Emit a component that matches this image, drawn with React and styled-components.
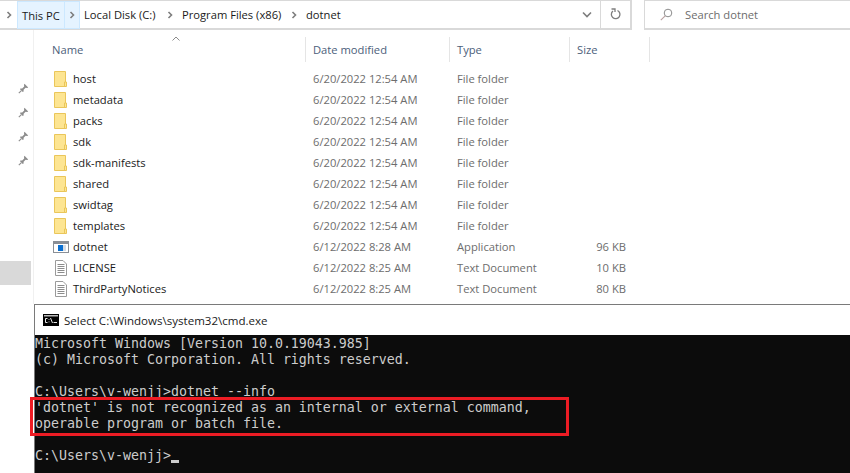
import React from 'react';
import styled, { createGlobalStyle } from 'styled-components';

const GlobalStyle = createGlobalStyle`
  html, body {
    margin: 0;
    padding: 0;
    background: #fff;
    overflow: hidden;
  }
  * { box-sizing: border-box; }
`;

const Page = styled.div`
  position: relative;
  width: 850px;
  height: 473px;
  overflow: hidden;
  display: flex;
  flex-direction: column;
  font-family: "Open Sans", "Noto Sans", sans-serif;
  font-size: 11.2px;
  background: #fff;
`;

const NavBar = styled.div`
  display: flex;
  height: 30px;
  flex-shrink: 0;
  justify-content: space-between;
`;

const AddressBar = styled.div`
  width: 632px;
  display: flex;
  align-items: center;
  padding-left: 6px;
  border: 1px solid #d9d9d9;
  border-width: 1px 2px 2px 0;
  color: #1a1a1a;
`;

const Crumb = styled.span`
  width: ${p => p.$w}px;
  white-space: nowrap;
`;

const ActiveCrumb = styled.div`
  display: flex;
  align-self: stretch;
  margin-left: 5px;
  background: #e5f3ff;
  border: 1px solid #cce8ff;
  margin-bottom: -1px;
`;

const ActiveLabel = styled.span`
  width: 47px;
  padding-left: 4px;
  display: flex;
  align-items: center;
  border-right: 1px solid #cce8ff;
`;

const ActiveArrow = styled.span`
  width: 14px;
  display: flex;
  align-items: center;
  justify-content: center;
`;

const Arrow = styled.span`
  width: ${p => p.$w}px;
  display: flex;
  justify-content: center;
  flex-shrink: 0;
`;

const AddressEnd = styled.div`
  margin-left: auto;
  align-self: stretch;
  display: flex;
  align-items: center;
`;

const DropButton = styled.span`
  width: 26px;
  display: flex;
  justify-content: center;
`;

const RefreshButton = styled.span`
  width: 30px;
  height: 100%;
  display: flex;
  align-items: center;
  justify-content: center;
  border-left: 1px solid #d9d9d9;
`;

const SearchBox = styled.div`
  width: 206px;
  display: flex;
  align-items: center;
  gap: 12px;
  padding-left: 15px;
  border: 1px solid #d9d9d9;
  border-width: 1px 0 2px 1px;
  color: #6d6d6d;
`;

const Explorer = styled.div`
  display: flex;
  height: 274px;
  flex-shrink: 0;
`;

const Sidebar = styled.div`
  width: 34px;
  flex-shrink: 0;
  display: flex;
  flex-direction: column;
  align-items: flex-start;
  padding-top: 46px;
  border-right: 1px solid #f0f0f0;
`;

const PinSlot = styled.div`
  width: 31px;
  height: 24px;
  display: flex;
  align-items: center;
  justify-content: center;
  padding-left: 15px;
`;

const SelectedItem = styled.div`
  width: 31px;
  height: 24px;
  margin-top: 89px;
  background: #d9d9d9;
`;

const FileList = styled.div`
  flex: 1;
  padding-top: 7px;
`;

const Columns = styled.div`
  display: grid;
  grid-template-columns: 272px 144px 120px 80px;
`;

const HeaderRow = styled(Columns)`
  height: 25px;
  margin-bottom: 6px;
  color: #4c607a;
`;

const HeaderCell = styled.div`
  position: relative;
  display: flex;
  align-items: center;
  padding-left: ${p => p.$first ? 18 : 7}px;
  border-right: 1px solid #e5e5e5;
`;

const SortMark = styled.svg`
  position: absolute;
  left: 138px;
  top: -1px;
`;

const Row = styled(Columns)`
  height: 21px;
  align-items: center;
  color: #6d6d6d;
`;

const NameCell = styled.div`
  display: flex;
  align-items: center;
  gap: 6px;
  padding-left: 20px;
  color: #1a1a1a;
  white-space: nowrap;
`;

const IconSlot = styled.span`
  width: 13px;
  height: 16px;
  display: flex;
  align-items: center;
  justify-content: center;
  flex-shrink: 0;
`;

const Cell = styled.div`
  padding-left: ${p => p.$pad}px;
  white-space: nowrap;
`;

const SizeCell = styled.div`
  text-align: right;
  padding-right: 24px;
  white-space: nowrap;
`;

const ConsoleWindow = styled.div`
  margin-left: 34px;
  flex: 1;
  display: flex;
  flex-direction: column;
  border-top: 1px solid #7a7a7a;
  border-left: 1px solid #7a7a7a;
`;

const TitleBar = styled.div`
  height: 30px;
  flex-shrink: 0;
  display: flex;
  align-items: center;
  gap: 5px;
  padding-left: 8px;
  background: #fff;
  color: #1a1a1a;
  font-size: 11.55px;
`;

const Terminal = styled.pre`
  position: relative;
  flex: 1;
  margin: 0;
  padding: 1px 0 0;
  background: #0c0c0c;
  color: #cccccc;
  font-family: "DejaVu Sans Mono", "Liberation Mono", monospace;
  font-size: 13.29px;
  line-height: 16px;
`;

const Caret = styled.span`
  display: inline-block;
  width: 8px;
  height: 3px;
  background: #cccccc;
  vertical-align: -3px;
`;

const Callout = styled.div`
  position: absolute;
  left: -5px;
  top: 62px;
  width: 539px;
  height: 39px;
  border: 3px solid #ed1c24;
`;

const files = [
  { name: 'host', date: '6/20/2022 12:54 AM', type: 'File folder', icon: 'folder' },
  { name: 'metadata', date: '6/20/2022 12:54 AM', type: 'File folder', icon: 'folder' },
  { name: 'packs', date: '6/20/2022 12:54 AM', type: 'File folder', icon: 'folder' },
  { name: 'sdk', date: '6/20/2022 12:54 AM', type: 'File folder', icon: 'folder' },
  { name: 'sdk-manifests', date: '6/20/2022 12:54 AM', type: 'File folder', icon: 'folder' },
  { name: 'shared', date: '6/20/2022 12:54 AM', type: 'File folder', icon: 'folder' },
  { name: 'swidtag', date: '6/20/2022 12:54 AM', type: 'File folder', icon: 'folder' },
  { name: 'templates', date: '6/20/2022 12:54 AM', type: 'File folder', icon: 'folder' },
  { name: 'dotnet', date: '6/12/2022 8:28 AM', type: 'Application', size: '96 KB', icon: 'app' },
  { name: 'LICENSE', date: '6/12/2022 8:25 AM', type: 'Text Document', size: '10 KB', icon: 'text' },
  { name: 'ThirdPartyNotices', date: '6/12/2022 8:25 AM', type: 'Text Document', size: '80 KB', icon: 'text' },
];

function Chevron() {
  return (
    <svg width="6" height="8" viewBox="0 0 6 8">
      <path d="M1.5 1 L4.5 4 L1.5 7" fill="none" stroke="#7d7d7d" strokeWidth="1.6" />
    </svg>
  );
}

function Pin() {
  return (
    <svg width="11" height="11" viewBox="0 0 11 11">
      <path d="M6.5 0.8 L10.2 4.5 L9.2 5 L7.6 4.8 L5.6 6.8 L5.6 8.6 L4.8 9 L2 6.2 L2.4 5.4 L4.2 5.4 L6.2 3.4 L6 1.8 Z" fill="#8c8c8c" />
      <path d="M3.4 7.6 L0.8 10.2" stroke="#8c8c8c" strokeWidth="1.1" />
    </svg>
  );
}

function FolderIcon() {
  return (
    <svg width="13" height="16" viewBox="0 0 13 16">
      <path d="M0.5 0.5 H11.5 V11 H12.5 V15.5 H0.5 Z" fill="#fde592" stroke="#eac65a" />
      <path d="M10.5 15 V11 H11.5" fill="none" stroke="#eac65a" />
    </svg>
  );
}

function AppIcon() {
  return (
    <svg width="16" height="12" viewBox="0 0 16 12" style={{ flexShrink: 0 }}>
      <rect x="0.5" y="0.5" width="15" height="11" fill="#fff" stroke="#8a8f96" />
      <rect x="1" y="1" width="14" height="2" fill="#8a8f96" />
      <rect x="5" y="4" width="5" height="6" fill="#0a6fd1" />
      <rect x="10" y="4" width="3" height="6" fill="#d5dde6" />
    </svg>
  );
}

function TextIcon() {
  return (
    <svg width="12" height="16" viewBox="0 0 12 16">
      <path d="M0.5 0.5 H8 L11.5 4 V15.5 H0.5 Z" fill="#fff" stroke="#9a9a9a" />
      <path d="M2.5 4.5 H9.5 M2.5 6.5 H9.5 M2.5 8.5 H9.5 M2.5 10.5 H9.5 M2.5 12.5 H9.5" stroke="#8c8c8c" />
    </svg>
  );
}

function CmdIcon() {
  return (
    <svg width="16" height="12" viewBox="0 0 16 12">
      <rect x="0" y="0" width="16" height="12" fill="#000" />
      <rect x="1" y="1" width="14" height="1.5" fill="#b9b9b9" />
      <path d="M4.5 4.5 H2.5 V8.5 H4.5 M6 5 V5.8 M6 7.5 V8.3 M7.5 4 L9.5 9 M10.5 8.5 H14" fill="none" stroke="#e6e6e6" />
    </svg>
  );
}

const fileIcons = { folder: FolderIcon, app: AppIcon, text: TextIcon };

export default function App() {
  return (
    <Page>
      <GlobalStyle />
      <NavBar>
        <AddressBar>
          <Chevron />
          <ActiveCrumb>
            <ActiveLabel>This PC</ActiveLabel>
            <ActiveArrow><Chevron /></ActiveArrow>
          </ActiveCrumb>
          <Arrow $w={4} />
          <Crumb $w={74}>Local Disk (C:)</Crumb>
          <Arrow $w={24}><Chevron /></Arrow>
          <Crumb $w={100}>Program Files (x86)</Crumb>
          <Arrow $w={24}><Chevron /></Arrow>
          <Crumb>dotnet</Crumb>
          <AddressEnd>
            <DropButton>
              <svg width="10" height="7" viewBox="0 0 10 7">
                <path d="M1 1.5 L5 5.5 L9 1.5" fill="none" stroke="#7d7d7d" strokeWidth="1.6" />
              </svg>
            </DropButton>
            <RefreshButton>
              <svg width="12" height="13" viewBox="0 0 12 13">
                <path d="M7.5 2.5 A4.3 4.3 0 1 1 3 3" fill="none" stroke="#7d7d7d" strokeWidth="1.3" />
                <path d="M1.5 1 H5 V4" fill="none" stroke="#7d7d7d" strokeWidth="1.3" />
              </svg>
            </RefreshButton>
          </AddressEnd>
        </AddressBar>
        <SearchBox>
          <svg width="13" height="13" viewBox="0 0 13 13">
            <circle cx="8" cy="5" r="3.8" fill="none" stroke="#8c8c8c" />
            <path d="M5.2 7.8 L0.8 12.2" stroke="#b9a0a0" strokeWidth="1.1" />
          </svg>
          Search dotnet
        </SearchBox>
      </NavBar>

      <Explorer>
        <Sidebar>
          {[0, 1, 2, 3].map(i => <PinSlot key={i}><Pin /></PinSlot>)}
          <SelectedItem />
        </Sidebar>
        <FileList>
          <HeaderRow>
            <HeaderCell $first>
              Name
              <SortMark width="8" height="5" viewBox="0 0 8 5">
                <path d="M0.5 4.5 L4 1 L7.5 4.5" fill="none" stroke="#8c8c8c" />
              </SortMark>
            </HeaderCell>
            <HeaderCell>Date modified</HeaderCell>
            <HeaderCell>Type</HeaderCell>
            <HeaderCell>Size</HeaderCell>
          </HeaderRow>
          {files.map(file => {
            const Icon = fileIcons[file.icon];
            return (
              <Row key={file.name}>
                <NameCell>
                  <IconSlot><Icon /></IconSlot>
                  {file.name}
                </NameCell>
                <Cell $pad={7}>{file.date}</Cell>
                <Cell $pad={7}>{file.type}</Cell>
                <SizeCell>{file.size}</SizeCell>
              </Row>
            );
          })}
        </FileList>
      </Explorer>

      <ConsoleWindow>
        <TitleBar>
          <CmdIcon />
          Select C:\Windows\system32\cmd.exe
        </TitleBar>
        <Terminal>{`Microsoft Windows [Version 10.0.19043.985]
(c) Microsoft Corporation. All rights reserved.

C:\\Users\\v-wenjj>dotnet --info
'dotnet' is not recognized as an internal or external command,
operable program or batch file.

C:\\Users\\v-wenjj>`}<Caret />
          <Callout />
        </Terminal>
      </ConsoleWindow>
    </Page>
  );
}
